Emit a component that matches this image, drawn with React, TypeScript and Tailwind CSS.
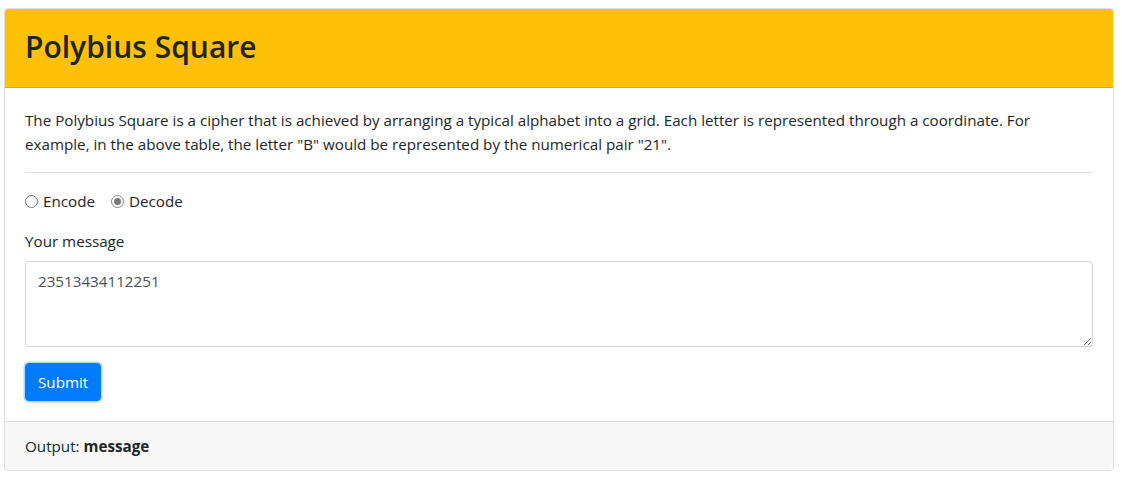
// Polybius Square cipher card

import { useState } from "react";

const FONT = "font-['Open_Sans',_'Noto_Sans',_sans-serif]";

function Radio({ checked, label, onClick }: { checked: boolean; label: string; onClick: () => void }) {
  return (
    <label className="inline-flex items-center mr-4 cursor-pointer" onClick={onClick}>
      <span
        className={
          "w-[13px] h-[13px] rounded-full border flex items-center justify-center bg-white " +
          (checked ? "border-[#8a8a8a]" : "border-[#767676]")
        }
      >
        {checked && <span className="w-[7px] h-[7px] rounded-full bg-[#7a7a7a]" />}
      </span>
      <span className="ml-[5px]">{label}</span>
    </label>
  );
}

export default function App() {
  const [mode, setMode] = useState<"encode" | "decode">("decode");
  const [message, setMessage] = useState("23513434112251");

  return (
    <div className={`${FONT} text-[#212529] text-[15.2px] leading-6 bg-white pt-[8px] pl-[4px] pr-[8px] pb-[8px]`}>
      <div className="border border-black/[0.125] rounded-[4px] overflow-hidden">
        {/* Header */}
        <div className="bg-[#ffc107] border-b border-black/[0.125] px-5 pt-[19px] pb-[21px]">
          <h2 className="text-[30px] leading-[38px] font-semibold">Polybius Square</h2>
        </div>

        {/* Body */}
        <div className="p-5">
          <p className="mb-4">
            The Polybius Square is a cipher that is achieved by arranging a typical alphabet into a grid. Each letter is
            represented through a coordinate. For example, in the above table, the letter "B" would be represented by the
            numerical pair "21".
          </p>
          <hr className="border-0 border-t border-black/10 my-4" />

          <div className="mb-4 flex items-center h-6">
            <Radio checked={mode === "encode"} label="Encode" onClick={() => setMode("encode")} />
            <Radio checked={mode === "decode"} label="Decode" onClick={() => setMode("decode")} />
          </div>

          <div className="mb-4">
            <label className="block mb-2">Your message</label>
            <textarea
              value={message}
              onChange={(e) => setMessage(e.target.value)}
              className="block w-full h-[86px] border border-[#ced4da] rounded-[4px] px-3 py-[7px] text-[#495057] outline-none"
            />
          </div>

          <button className="bg-[#007bff] text-white rounded-[4px] px-3 h-[38px] border border-[#007bff] shadow-[0_0_0_1.5px_rgba(38,143,255,0.35)]">
            Submit
          </button>
        </div>

        {/* Footer */}
        <div className="bg-[#f7f7f7] border-t border-black/[0.125] px-5 py-3">
          Output: <b className="font-bold">message</b>
        </div>
      </div>
    </div>
  );
}
